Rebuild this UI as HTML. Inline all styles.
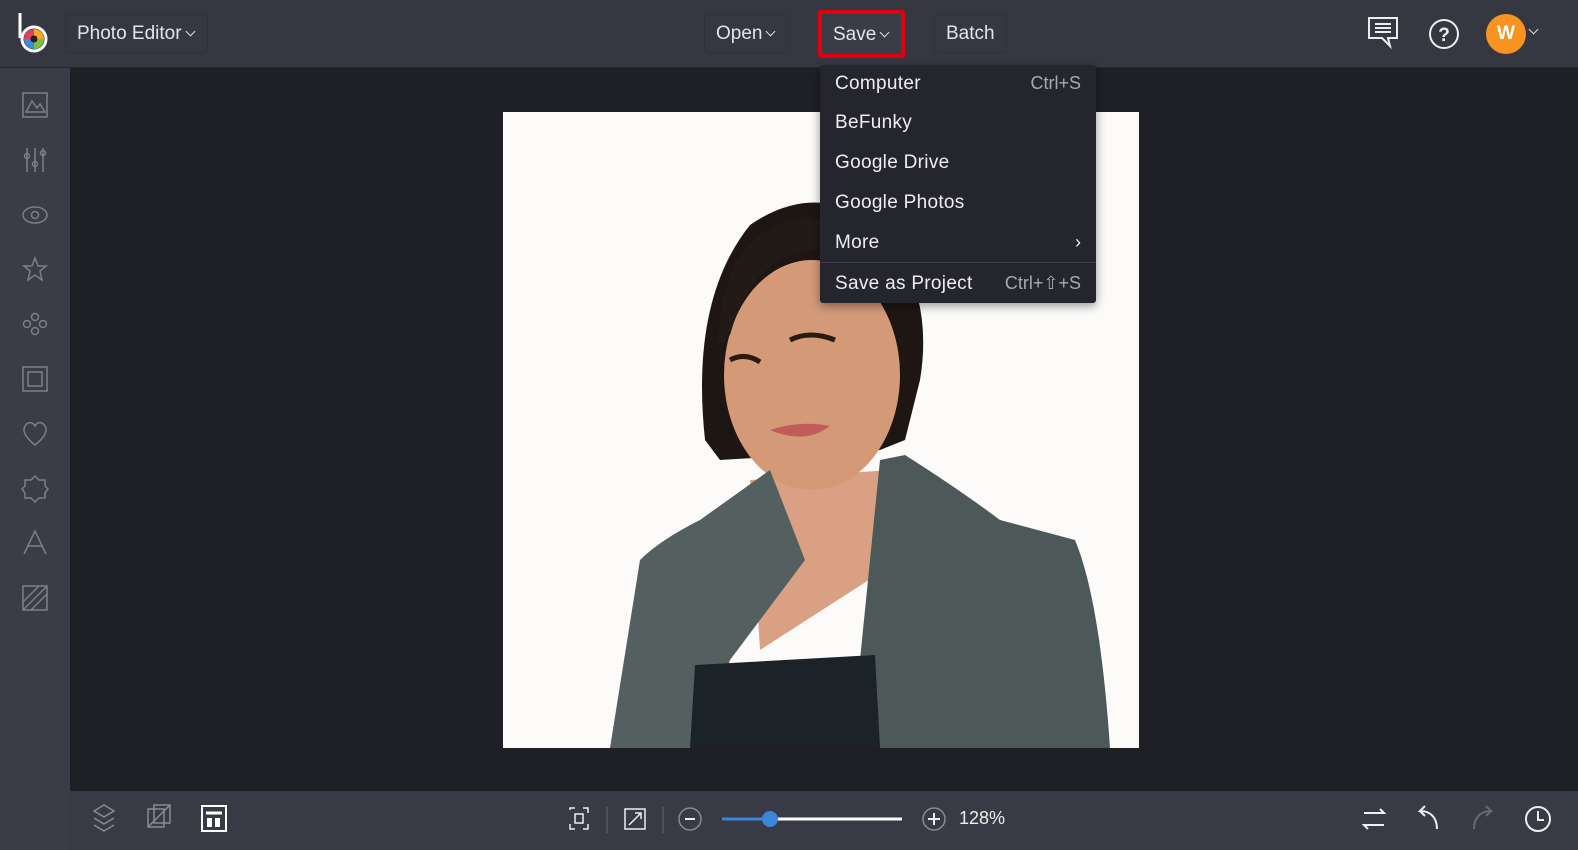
<!DOCTYPE html>
<html><head><meta charset="utf-8"><style>
*{margin:0;padding:0;box-sizing:border-box}
body{width:1578px;height:850px;overflow:hidden;background:#1f2025;font-family:"Liberation Sans",sans-serif;position:relative}
.top{position:absolute;left:0;top:0;width:1578px;height:68px;background:#363841;border-bottom:1px solid #2a2b31}
.side{position:absolute;left:0;top:68px;width:70px;height:782px;background:#3a3c48}
.bot{position:absolute;left:70px;top:791px;width:1508px;height:59px;background:#383a45}
.btn{position:absolute;top:14px;height:39px;border:1px solid #2f3038;border-radius:3px;color:#e4e4e8;font-size:19px;line-height:37px;padding:0 11px}
.cv{display:inline-block;width:7px;height:7px;border-right:1.5px solid #ddd;border-bottom:1.5px solid #ddd;transform:rotate(45deg);margin:0 2px 5px 5px;vertical-align:middle}
.menu{position:absolute;left:820px;top:65px;width:276px;height:238px;background:#25262d;border-radius:3px;box-shadow:0 3px 10px rgba(0,0,0,.4)}
.mi{position:absolute;left:15px;color:#eeeef0;font-size:19px;letter-spacing:.3px}
.sc{position:absolute;right:15px;color:#a8a9b0;font-size:18px}
svg{position:absolute}
</style></head><body>
<div class="top"></div>
<svg style="left:16px;top:10px" width="36" height="46" viewBox="0 0 36 46">
<line x1="4" y1="3" x2="4" y2="28" stroke="#fff" stroke-width="3"/>
<circle cx="18" cy="29" r="12" fill="none" stroke="#fff" stroke-width="3"/>
<path d="M18 29 L18 19 A10 10 0 0 1 28 29Z" fill="#f5a623"/><path d="M18 29 L28 29 A10 10 0 0 1 18 39Z" fill="#7bc043"/><path d="M18 29 L18 39 A10 10 0 0 1 8 29Z" fill="#3b8dd8"/><path d="M18 29 L8 29 A10 10 0 0 1 18 19Z" fill="#e23d5c"/>
<circle cx="18" cy="29" r="3.5" fill="#222"/>
</svg>
<div class="btn" style="left:65px">Photo Editor<span class="cv"></span></div>
<div class="btn" style="left:704px">Open<span class="cv"></span></div>
<div class="btn" style="left:818px;top:10px;height:48px;line-height:42px;border:4px solid #e00010;padding:0 11px;background:#3a3c46">Save<span class="cv"></span></div>
<div class="btn" style="left:934px">Batch</div>
<svg style="left:1366px;top:16px" width="36" height="34" viewBox="0 0 36 34" fill="none" stroke="#eee" stroke-width="2"><path d="M3 2H31V22H22L24 30L16 22H3Z"/><path d="M9 8H25M9 12H25M9 16H25"/></svg>
<svg style="left:1427px;top:17px" width="34" height="34"><circle cx="17" cy="17" r="14" fill="none" stroke="#eee" stroke-width="2"/><text x="17" y="24" font-size="19" font-weight="bold" fill="#eee" text-anchor="middle" font-family="Liberation Sans">?</text></svg>
<div style="position:absolute;left:1486px;top:14px;width:40px;height:40px;border-radius:50%;background:#f7931e;color:#fff;font-weight:bold;font-size:19px;text-align:center;line-height:40px">W</div>
<span class="cv" style="position:absolute;left:1530px;top:26px;margin:0"></span>
<div class="side"></div>
<svg style="left:0;top:68px" width="70" height="560" fill="none" stroke="#7c7e8a" stroke-width="1.5">
<rect x="23" y="25" width="24" height="24"/><path d="M26 44L32 33L37 40L40 36L45 44Z"/>
<path d="M27 80V104M35 80V104M43 80V104"/><circle cx="27" cy="88" r="2.5"/><circle cx="35" cy="96" r="2.5"/><circle cx="43" cy="85" r="2.5"/>
<ellipse cx="35" cy="147" rx="12" ry="8"/><circle cx="35" cy="147" r="3.5"/>
<path d="M35 190L38 198L46 198L40 203L42 212L35 207L28 212L30 203L24 198L32 198Z"/>
<circle cx="35" cy="249" r="3.5"/><circle cx="27" cy="256" r="3.5"/><circle cx="43" cy="256" r="3.5"/><circle cx="35" cy="263" r="3.5"/>
<rect x="23" y="299" width="24" height="24"/><rect x="28" y="304" width="14" height="14"/>
<path d="M35 377C25 369 22 363 25 358C28 353 33 354 35 358C37 354 42 353 45 358C48 363 45 369 35 377Z"/>
<path d="M35 408L39 412L45 412L45 418L48 421L45 425L45 430L39 430L35 434L31 430L25 430L25 425L22 421L25 418L25 412L31 412Z"/>
<path d="M24 486L35 463L46 486M28 478H42"/>
<rect x="23" y="518" width="24" height="24"/><path d="M23 534L39 518M23 542L47 518M31 542L47 526"/>
</svg>
<div style="position:absolute;left:503px;top:112px;width:636px;height:636px;background:#fcfbfa;overflow:hidden">
<svg style="left:0;top:0" width="636" height="636" viewBox="503 112 636 636">
<path d="M705 440 Q690 300 750 225 Q815 180 880 225 Q935 290 920 380 L905 440 L880 450 L720 460Z" fill="#1e1612"/>
<path d="M750 480L890 470L900 560L760 650Z" fill="#d9a084"/>
<ellipse cx="812" cy="375" rx="88" ry="115" fill="#d49a78"/>
<path d="M718 345 Q720 240 790 220 Q860 210 902 280 Q880 255 815 250 Q752 255 730 335Z" fill="#221a15"/>
<path d="M610 748 L640 560 Q660 540 700 520 L770 470 L805 560 L730 660 L700 748Z" fill="#53605f"/>
<path d="M880 460 L905 455 Q960 490 1000 520 L1075 540 Q1100 600 1110 748 L870 748 L860 660 Z" fill="#4d5959"/>
<path d="M695 665 L875 655 L880 748 L690 748Z" fill="#1b2228"/>
<path d="M730 360 Q745 352 760 362M790 340Q810 330 835 340" stroke="#2a1a12" stroke-width="5" fill="none"/>
<path d="M770 430 Q800 420 830 426 Q805 445 770 430Z" fill="#c25c58"/>
</svg></div>
<div class="menu">
<div class="mi" style="top:8px">Computer</div><div class="sc" style="top:8px">Ctrl+S</div>
<div class="mi" style="top:47px">BeFunky</div>
<div class="mi" style="top:87px">Google Drive</div>
<div class="mi" style="top:127px">Google Photos</div>
<div class="mi" style="top:167px">More</div><div class="sc" style="top:167px;color:#eee">&#8250;</div>
<div style="position:absolute;left:0;top:197px;width:276px;height:1px;background:#3c3d45"></div>
<div class="mi" style="top:208px">Save as Project</div><div class="sc" style="top:208px">Ctrl+⇧+S</div>
</div>
<div class="bot"></div>
<svg style="left:0;top:791px" width="1578" height="59" fill="none" stroke="#888a95" stroke-width="1.5">
<path d="M94 20L104 14L114 20L104 26ZM94 27L104 33L114 27M94 34L104 40L114 34"/>
<rect x="148" y="18" width="16" height="18"/><rect x="154" y="14" width="16" height="18"/><path d="M148 36L170 14"/>
<rect x="202" y="15" width="24" height="25" stroke="#fff" stroke-width="2"/><path d="M206 22H222" stroke="#fff" stroke-width="3"/><rect x="207" y="27" width="5" height="9" fill="#fff" stroke="none"/><rect x="215" y="27" width="5" height="9" fill="#fff" stroke="none"/>
<g stroke="#eee"><path d="M570 19V17H575M583 17H588V22M588 33V38H583M575 38H570V33"/><rect x="575" y="23" width="8" height="9"/>
<rect x="625" y="18" width="20" height="20"/><path d="M629 34L641 22M635 22H641V28"/></g>
<path d="M607 16V42M663 16V42" stroke="#555763"/>
<circle cx="690" cy="28" r="11"/><path d="M685 28H695" stroke="#eee" stroke-width="2"/>
<path d="M722 28H770" stroke="#3b86d8" stroke-width="3"/><path d="M770 28H902" stroke="#fff" stroke-width="3"/>
<circle cx="770" cy="28" r="8" fill="#3b86d8" stroke="none"/>
<circle cx="934" cy="28" r="11"/><path d="M928 28H940M934 22V34" stroke="#eee" stroke-width="2"/>
<g stroke="#eee" stroke-width="2"><path d="M1364 22H1384L1380 18M1384 34H1364L1368 38"/><path d="M1437 38C1437 26 1430 20 1420 20L1425 15M1420 20L1425 25"/><circle cx="1538" cy="28" r="12"/><path d="M1538 20V29H1544"/></g>
<path d="M1474 38C1474 26 1481 20 1491 20L1486 15M1491 20L1486 25" stroke="#666873" stroke-width="2"/>
</svg>
<div style="position:absolute;left:959px;top:808px;color:#eee;font-size:18px">128%</div>
</body></html>
